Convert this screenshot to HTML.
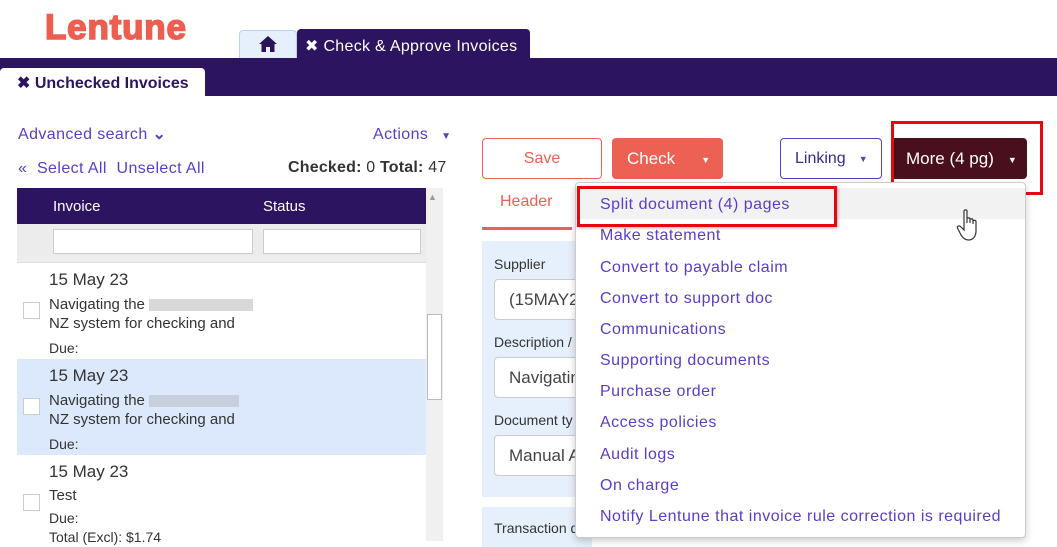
<!DOCTYPE html>
<html><head><meta charset="utf-8"><style>
*{box-sizing:border-box;margin:0;padding:0}
body{width:1057px;height:541px;overflow:hidden;background:#fff;font-family:"Liberation Sans",sans-serif;position:relative;color:#222}
.a{position:absolute;white-space:nowrap}
.lk{color:#5a3dc8;font-size:16px;letter-spacing:0.4px}
.inp{position:absolute;background:#fff;border:1px solid #ccc;border-radius:4px}
.dd{color:#5a3dc8;font-size:16px;position:absolute;left:600px;letter-spacing:0.5px}
</style></head><body>
<div class="a" style="left:45px;top:8px;font-size:35px;font-weight:bold;color:#ec5f50;letter-spacing:0.8px;-webkit-text-stroke:1.6px #ec5f50">Lentune</div>
<div class="a" style="left:239px;top:30px;width:58px;height:29px;background:#e6f0fc;border:1px solid #b9d2f0;border-bottom:none;border-radius:4px 4px 0 0"></div>
<svg class="a" style="left:258px;top:35px" width="20" height="18" viewBox="0 0 20 18"><path d="M10 1 L19 9 L16.5 9 L16.5 17 L12 17 L12 12 L8 12 L8 17 L3.5 17 L3.5 9 L1 9 Z" fill="#2a1458"/></svg>
<div class="a" style="left:297px;top:29px;width:233px;height:30px;background:#2c1460;border-radius:4px 4px 0 0;color:#fff;font-size:16px;padding:7px 0 0 8px;letter-spacing:0.3px">✖ Check &amp; Approve Invoices</div>
<div class="a" style="left:0;top:58px;width:1057px;height:38px;background:#2c1460"></div>
<div class="a" style="left:0;top:68px;width:205px;height:28px;background:#fff;border-radius:4px 4px 0 0;color:#2c1460;font-weight:bold;font-size:16px;padding:5px 0 0 17px">✖ Unchecked Invoices</div>
<div class="a lk" style="left:18px;top:124px">Advanced search <span style="font-weight:bold">⌄</span></div>
<div class="a lk" style="left:373px;top:126px">Actions <span style="font-size:10px;margin-left:8px">▼</span></div>
<div class="a lk" style="left:18px;top:160px">«&nbsp; Select All&nbsp;&nbsp;Unselect All</div>
<div class="a" style="left:288px;top:159px;font-size:16px;color:#333;letter-spacing:0.2px"><b>Checked:</b> 0 <b>Total:</b> 47</div>
<div class="a" style="left:17px;top:188px;width:409px;height:36px;background:#2c1460;color:#fff;font-size:15px"><span class="a" style="left:36px;top:10px">Invoice</span><span class="a" style="left:246px;top:10px">Status</span></div>
<div class="a" style="left:426px;top:188px;width:17px;height:353px;background:#f0f0f0"></div>
<div class="a" style="left:428px;top:192px;font-size:9px;color:#999">▲</div>
<div class="a" style="left:427px;top:314px;width:15px;height:86px;background:#fff;border:1px solid #bbb"></div>
<div class="a" style="left:17px;top:224px;width:409px;height:39px;background:#ececec;border-bottom:1px solid #ddd"></div>
<div class="inp" style="left:53px;top:229px;width:200px;height:25px;border-radius:0"></div>
<div class="inp" style="left:263px;top:229px;width:158px;height:25px;border-radius:0"></div>
<div class="a" style="left:17px;top:359px;width:409px;height:96px;background:#dce9fc"></div>
<div class="a" style="left:23px;top:302px;width:17px;height:17px;border:1px solid #ccc;background:#fff"></div>
<div class="a" style="left:23px;top:398px;width:17px;height:17px;border:1px solid #ccc;background:#fff"></div>
<div class="a" style="left:23px;top:494px;width:17px;height:17px;border:1px solid #ccc;background:#fff"></div>
<div class="a" style="left:49px;top:270px;font-size:17px;color:#333;line-height:20px">15 May 23</div>
<div class="a" style="left:49px;top:295px;font-size:15px;color:#333;line-height:19px">Navigating the <span style="display:inline-block;width:104px;height:12px;background:#d8d8d8;vertical-align:middle"></span><br>NZ system for checking and</div>
<div class="a" style="left:49px;top:340px;font-size:14px;color:#333">Due:</div>
<div class="a" style="left:49px;top:366px;font-size:17px;color:#333;line-height:20px">15 May 23</div>
<div class="a" style="left:49px;top:391px;font-size:15px;color:#333;line-height:19px">Navigating the <span style="display:inline-block;width:90px;height:12px;background:#c8cfdc;vertical-align:middle"></span><br>NZ system for checking and</div>
<div class="a" style="left:49px;top:436px;font-size:14px;color:#333">Due:</div>
<div class="a" style="left:49px;top:462px;font-size:17px;color:#333;line-height:20px">15 May 23</div>
<div class="a" style="left:49px;top:487px;font-size:15px;color:#333">Test</div>
<div class="a" style="left:49px;top:510px;font-size:14px;color:#333">Due:</div>
<div class="a" style="left:49px;top:529px;font-size:14px;color:#333">Total (Excl): $1.74</div>
<!-- right -->
<div class="a" style="left:482px;top:138px;width:120px;height:41px;border:1px solid #ec6153;border-radius:4px;color:#ec6153;font-size:16px;text-align:center;padding-top:11px">Save</div>
<div class="a" style="left:612px;top:138px;width:111px;height:41px;background:#ec6153;border-radius:4px;color:#fff;font-size:17px;padding:11px 0 0 15px">Check<span style="font-size:9px;margin-left:26px;vertical-align:middle">▼</span></div>
<div class="a" style="left:780px;top:138px;width:102px;height:41px;border:1px solid #5a3dc8;border-radius:4px;color:#3a2a90;font-size:16px;padding:11px 0 0 14px">Linking<span style="font-size:9px;margin-left:13px;vertical-align:middle;color:#5a3dc8">▼</span></div>
<div class="a" style="left:891px;top:138px;width:136px;height:41px;background:#4a0f1c;border-radius:4px;color:#fff;font-size:17px;padding:11px 0 0 15px">More (4 pg)<span style="font-size:9px;margin-left:14px;vertical-align:middle">▼</span></div>
<div class="a" style="left:891px;top:121px;width:152px;height:74px;border:3px solid #e8070e"></div>
<div class="a" style="left:500px;top:193px;font-size:16px;color:#ec6153">Header</div>
<div class="a" style="left:482px;top:227px;width:90px;height:3px;background:#ec6153"></div>
<div class="a" style="left:482px;top:241px;width:110px;height:256px;background:#e6f0fc"></div>
<div class="a" style="left:482px;top:507px;width:110px;height:40px;background:#e6f0fc"></div>
<div class="a" style="left:494px;top:256px;font-size:14px;color:#333">Supplier</div>
<div class="inp" style="left:494px;top:279px;width:100px;height:41px;font-size:17px;color:#444;padding:10px 0 0 14px">(15MAY2</div>
<div class="a" style="left:494px;top:334px;font-size:14px;color:#333">Description /</div>
<div class="inp" style="left:494px;top:357px;width:100px;height:41px;font-size:17px;color:#444;padding:10px 0 0 14px">Navigatin</div>
<div class="a" style="left:494px;top:412px;font-size:14px;color:#333">Document ty</div>
<div class="inp" style="left:494px;top:435px;width:100px;height:41px;font-size:17px;color:#444;padding:10px 0 0 14px">Manual A</div>
<div class="a" style="left:494px;top:520px;font-size:14px;color:#333">Transaction d</div>
<!-- dropdown -->
<div class="a" style="left:575px;top:182px;width:451px;height:356px;background:#fff;border:1px solid #ccc;border-radius:4px;box-shadow:0 3px 8px rgba(0,0,0,.2)"></div>
<div class="a" style="left:576px;top:188px;width:449px;height:31px;background:#f2f2f2"></div>
<div class="dd" style="top:196px">Split document (4) pages</div>
<div class="dd" style="top:227px">Make statement</div>
<div class="dd" style="top:259px">Convert to payable claim</div>
<div class="dd" style="top:290px">Convert to support doc</div>
<div class="dd" style="top:321px">Communications</div>
<div class="dd" style="top:352px">Supporting documents</div>
<div class="dd" style="top:383px">Purchase order</div>
<div class="dd" style="top:414px">Access policies</div>
<div class="dd" style="top:446px">Audit logs</div>
<div class="dd" style="top:477px">On charge</div>
<div class="dd" style="top:508px">Notify Lentune that invoice rule correction is required</div>
<div class="a" style="left:577px;top:186px;width:260px;height:41px;border:3px solid #e8070e;box-shadow:1px 1px 3px rgba(0,0,0,.3)"></div>
<svg class="a" style="left:956px;top:209px" width="28" height="34" viewBox="0 0 28 34"><path d="M8 2 C8 0.5 11 0.5 11 2 L11 14 L11 10 C11 8.5 14 8.5 14 10 L14 14 L14 11 C14 9.5 17 9.5 17 11 L17 15 L17 12.5 C17 11 20 11 20 12.5 L20 22 C20 27 17 31 13 31 C9 31 7 29 5 26 L1.5 19 C0.8 17.5 3 16 4.5 17.5 L8 21 Z" fill="#fff" stroke="#333" stroke-width="1.2"/></svg>
</body></html>
